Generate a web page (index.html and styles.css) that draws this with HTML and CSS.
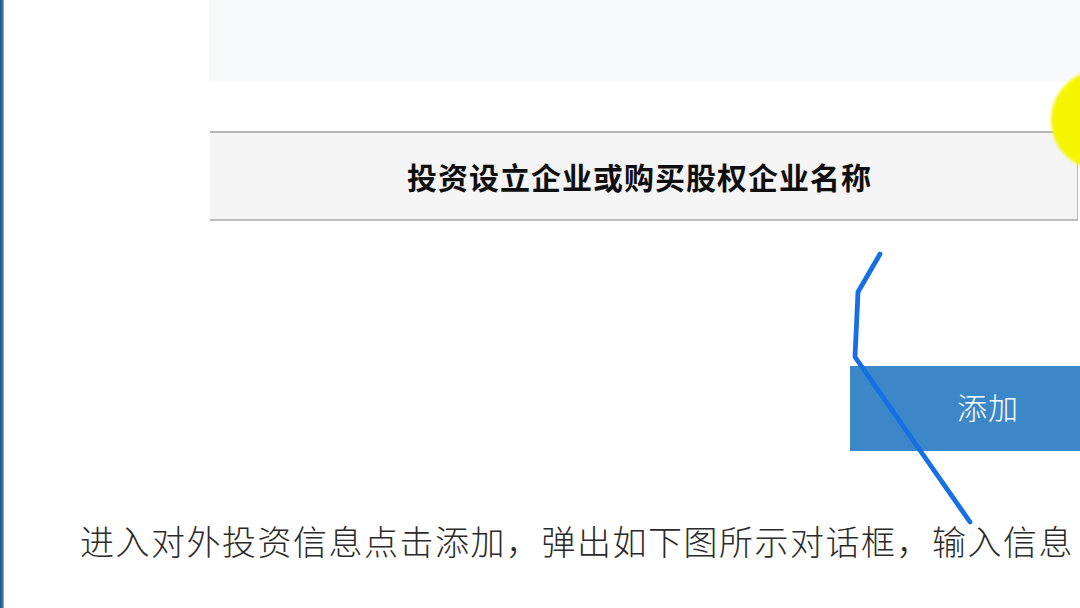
FILE: index.html
```html
<!DOCTYPE html>
<html lang="zh-CN">
<head>
<meta charset="utf-8">
<title>对外投资信息</title>
<link rel="stylesheet" href="styles.css">
</head>
<body>
<div class="screen">
  <div class="side-bar"></div>
  <main class="main">
    <div class="top-panel"></div>
    <div class="grid-head">
      <div class="grid-cell">投资设立企业或购买股权企业名称</div>
    </div>
    <div class="actions">
      <button class="btn-add" type="button">添加</button>
    </div>
    <p class="caption">进入对外投资信息点击添加，弹出如下图所示对话框，输入信息</p>
  </main>
  <svg class="annotations" width="1080" height="608" viewBox="0 0 1080 608" aria-hidden="true">
    <defs>
      <filter id="soft" x="-20%" y="-20%" width="140%" height="140%">
        <feGaussianBlur stdDeviation="1.6"/>
      </filter>
    </defs>
    <circle cx="1101" cy="120" r="50" fill="#f5f500" filter="url(#soft)"/>
    <polyline points="880,254 858,292 855,357 970,522" fill="none" stroke="#176fe6" stroke-width="4.8" stroke-linecap="round" stroke-linejoin="round"/>
  </svg>
</div>
</body>
</html>
```
FILE: styles.css
```css
* {
  box-sizing: border-box;
}

html, body {
  margin: 0;
  padding: 0;
  background: #ffffff;
}

body {
  width: 1080px;
  height: 608px;
  overflow: hidden;
  font-family: "Noto Sans CJK SC", "Microsoft YaHei", sans-serif;
}

.screen {
  position: relative;
  display: flex;
  width: 1080px;
  height: 608px;
  overflow: hidden;
}

.side-bar {
  flex: 0 0 4px;
  background: linear-gradient(to right, #1f4f80, #3f77a8 70%, #a9c3dc);
}

.main {
  flex: 1 1 auto;
  min-width: 0;
  display: flex;
  flex-direction: column;
}

.top-panel {
  margin-left: 205px;
  height: 82px;
  background: #f8f9fb;
}

.grid-head {
  margin-left: 206px;
  margin-top: 49px;
  width: 868px;
  height: 90px;
  display: flex;
  background: #f4f4f5;
  border-top: 2px solid #b6b6b6;
  border-bottom: 2px solid #bcbcbc;
  border-right: 1px solid #b9b9b9;
}

.grid-cell {
  flex: 1;
  display: flex;
  align-items: center;
  justify-content: center;
  padding-right: 8px;
  font-size: 30px;
  font-weight: 700;
  letter-spacing: 1px;
  color: #0f0f0f;
}

.actions {
  display: flex;
  margin-top: 145px;
  padding-left: 846px;
}

.btn-add {
  flex: 0 0 276px;
  height: 85px;
  border: 0;
  padding: 0 0 5px 0;
  background: #3c87c8;
  color: #ffffff;
  font-family: "Noto Sans CJK SC", "Microsoft YaHei", sans-serif;
  font-size: 30px;
  font-weight: 300;
  letter-spacing: 1px;
  line-height: 80px;
}

.caption {
  margin: 70px 0 0 0;
  padding-left: 76px;
  white-space: nowrap;
  font-size: 34px;
  font-weight: 300;
  line-height: 40px;
  letter-spacing: 1.5px;
  color: #2a2a2a;
}

.annotations {
  position: absolute;
  left: 0;
  top: 0;
  pointer-events: none;
}
```
